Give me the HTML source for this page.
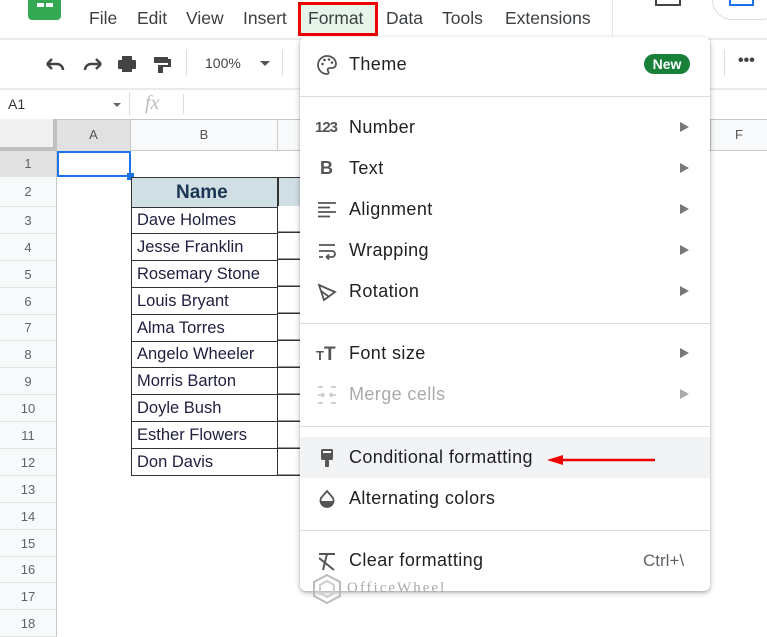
<!DOCTYPE html>
<html><head><meta charset="utf-8">
<style>
*{margin:0;padding:0;box-sizing:border-box}
body{width:767px;height:628px;overflow:hidden;background:#fff;font-family:"Liberation Sans",Arial,sans-serif;position:relative;color:#202124}
.abs{position:absolute}
.menu span{position:absolute;top:8px;font-size:17.5px;color:#3c4043}
.rh{position:absolute;left:0;width:57px;text-align:center;font-size:13px;color:#5f6368;border-bottom:1px solid #e2e3e3;background:#f8f9fa;border-right:1px solid #c7c7c7}
.cell{position:absolute;left:131px;width:147px;height:27px;border:1.5px solid #333;border-top:none;font-size:16.5px;padding-left:5px;line-height:27px;color:#1f1f3f}
.mi{position:absolute;left:300px;width:410px;height:41px}
.mi .t{position:absolute;left:49px;top:10px;font-size:18px;letter-spacing:0.4px;color:#202124}
.mi .ar{position:absolute;left:380px;top:15px;width:0;height:0;border-left:9px solid #777;border-top:5px solid transparent;border-bottom:5px solid transparent}
.mi svg{position:absolute;left:16px;top:10px}
.sep{position:absolute;left:300px;width:410px;height:1px;background:#dadce0}
</style></head><body>
<div class="abs" style="left:28px;top:0;width:33px;height:20px;background:#34a853;border-radius:0 0 4px 4px"></div>
<div class="abs" style="left:37px;top:3px;width:7px;height:4px;background:#fff"></div>
<div class="abs" style="left:46px;top:3px;width:7px;height:4px;background:#fff"></div>
<div class="menu">
<span style="left:89px">File</span><span style="left:137px">Edit</span><span style="left:186px">View</span><span style="left:243px">Insert</span><span style="left:386px">Data</span><span style="left:442px">Tools</span><span style="left:505px">Extensions</span>
</div>
<div class="abs" style="left:298px;top:2px;width:80px;height:34px;border:3px solid #e00;background:#e6f4ea"></div>
<span class="abs" style="left:308px;top:8px;font-size:17.5px;color:#3c4043">Format</span>
<div class="abs" style="left:612px;top:0;width:1px;height:38px;background:#e8e8e8"></div>
<div class="abs" style="left:655px;top:0;width:26px;height:6px;border:2px solid #444;border-top:none"></div>
<div class="abs" style="left:712px;top:-20px;width:70px;height:40px;border:1px solid #ddd;border-radius:20px"></div>
<div class="abs" style="left:729px;top:0;width:25px;height:6px;border:2px solid #1a73e8;border-top:none"></div>
<div class="abs" style="left:0;top:38px;width:767px;height:2px;background:#eaeaea"></div>
<svg class="abs" style="left:44px;top:54px" width="130" height="20" viewBox="0 0 130 20">
<path d="M3 10 L8 5 M3 10 L8 15 M3 10 H13 A6 6 0 0 1 19 16" stroke="#444" stroke-width="2.5" fill="none"/>
<path d="M58 10 L53 5 M58 10 L53 15 M58 10 H48 A6 6 0 0 0 42 16" stroke="#444" stroke-width="2.5" fill="none" transform="translate(-1,0)"/>
<rect x="74" y="6" width="18" height="9" rx="1" fill="#444"/><rect x="78" y="2" width="10" height="4" fill="#444"/><rect x="78" y="12" width="10" height="6" fill="#444"/>
<rect x="110" y="3" width="14" height="6" fill="#444"/><rect x="124" y="5" width="3" height="7" fill="#444"/><rect x="114" y="11" width="5" height="8" fill="#444"/><path d="M127 12 H117 V12" stroke="#444" stroke-width="2"/>
</svg>
<div class="abs" style="left:186px;top:50px;width:1px;height:26px;background:#ddd"></div>
<span class="abs" style="left:205px;top:55px;font-size:14px;color:#444">100%</span>
<div class="abs" style="left:260px;top:61px;border-top:5px solid #555;border-left:5px solid transparent;border-right:5px solid transparent"></div>
<div class="abs" style="left:282px;top:50px;width:1px;height:26px;background:#ddd"></div>
<div class="abs" style="left:724px;top:50px;width:1px;height:26px;background:#ddd"></div>
<span class="abs" style="left:738px;top:52px;font-size:16px;color:#444;font-weight:bold">•••</span>
<div class="abs" style="left:0;top:88px;width:767px;height:2px;background:#eaeaea"></div>
<span class="abs" style="left:8px;top:96px;font-size:14px;color:#333">A1</span>
<div class="abs" style="left:113px;top:103px;border-top:4px solid #666;border-left:4px solid transparent;border-right:4px solid transparent"></div>
<div class="abs" style="left:129px;top:92px;width:1px;height:24px;background:#ddd"></div>
<span class="abs" style="left:145px;top:92px;font-size:20px;color:#bbb;font-style:italic;font-family:'Liberation Serif',serif">fx</span>
<div class="abs" style="left:183px;top:94px;width:1px;height:20px;background:#ddd"></div>
<div class="abs" style="left:0;top:119px;width:767px;height:32px;background:#f8f9fa;border-top:1px solid #c7c7c7;border-bottom:1px solid #c7c7c7"></div>
<div class="abs" style="left:0;top:119px;width:57px;height:32px;background:#f1f1f1;border-right:4px solid #c0c0c0;border-bottom:4px solid #c0c0c0"></div>
<div class="abs" style="left:57px;top:120px;width:74px;height:31px;background:#e1e1e1;border-right:1px solid #ccc;text-align:center;line-height:30px;font-size:13px;color:#555">A</div>
<div class="abs" style="left:131px;top:120px;width:147px;height:31px;border-right:1px solid #ccc;text-align:center;line-height:30px;font-size:13px;color:#555">B</div>
<div class="abs" style="left:710px;top:120px;width:57px;height:31px;border-left:1px solid #ccc;text-align:center;line-height:30px;font-size:13px;color:#555">F</div>
<div class="rh" style="top:151px;height:26px;line-height:26px;background:#e1e1e1">1</div>
<div class="rh" style="top:177px;height:30px;line-height:30px">2</div>
<div class="rh" style="top:207px;height:27px;line-height:27px">3</div>
<div class="rh" style="top:234px;height:27px;line-height:27px">4</div>
<div class="rh" style="top:261px;height:27px;line-height:27px">5</div>
<div class="rh" style="top:288px;height:27px;line-height:27px">6</div>
<div class="rh" style="top:315px;height:26px;line-height:26px">7</div>
<div class="rh" style="top:341px;height:27px;line-height:27px">8</div>
<div class="rh" style="top:368px;height:27px;line-height:27px">9</div>
<div class="rh" style="top:395px;height:27px;line-height:27px">10</div>
<div class="rh" style="top:422px;height:27px;line-height:27px">11</div>
<div class="rh" style="top:449px;height:27px;line-height:27px">12</div>
<div class="rh" style="top:476px;height:27px;line-height:27px">13</div>
<div class="rh" style="top:503px;height:27px;line-height:27px">14</div>
<div class="rh" style="top:530px;height:27px;line-height:27px">15</div>
<div class="rh" style="top:557px;height:26px;line-height:26px">16</div>
<div class="rh" style="top:583px;height:27px;line-height:27px">17</div>
<div class="rh" style="top:610px;height:27px;line-height:27px">18</div>
<div class="abs" style="left:57px;top:151px;width:74px;height:26px;border:2px solid #1a73e8"></div>
<div class="abs" style="left:127px;top:173px;width:7px;height:7px;background:#1a73e8"></div>
<div class="abs" style="left:131px;top:177px;width:170px;height:31px;background:#d0dfe3;border:1.5px solid #333"></div>
<div class="abs" style="left:277px;top:177px;width:1.5px;height:299px;background:#333"></div>
<span class="abs" style="left:176px;top:182px;font-size:19px;font-weight:bold;color:#1c3554">Name</span>
<div class="cell" style="top:207px">Dave Holmes</div>
<div class="cell" style="top:234px">Jesse Franklin</div>
<div class="cell" style="top:261px">Rosemary Stone</div>
<div class="cell" style="top:288px">Louis Bryant</div>
<div class="cell" style="top:315px">Alma Torres</div>
<div class="cell" style="top:341px">Angelo Wheeler</div>
<div class="cell" style="top:368px">Morris Barton</div>
<div class="cell" style="top:395px">Doyle Bush</div>
<div class="cell" style="top:422px">Esther Flowers</div>
<div class="cell" style="top:449px">Don Davis</div>
<div class="abs" style="left:278px;top:206px;width:22px;height:270px;border-bottom:1.5px solid #333;background:repeating-linear-gradient(#fff 0,#fff 25.5px,#333 25.5px,#333 27px)"></div>
<div class="abs" style="left:300px;top:37px;width:410px;height:554px;background:#fff;border-radius:6px;box-shadow:0 2px 6px rgba(0,0,0,.25),0 1px 2px rgba(0,0,0,.15)"></div>
<div class="mi" style="top:44px"><svg width="22" height="22" viewBox="0 0 22 22"><path d="M11 2 A9 9 0 0 0 11 20 C13 20 13 18 12 17 C11 15.5 12 14 14 14 H16 A4 4 0 0 0 20 10 C20 5.5 16 2 11 2 Z" fill="none" stroke="#555" stroke-width="1.8"/><circle cx="6.5" cy="10" r="1.3" fill="#555"/><circle cx="8.5" cy="6" r="1.3" fill="#555"/><circle cx="13" cy="5.5" r="1.3" fill="#555"/><circle cx="16" cy="8.5" r="1.3" fill="#555"/></svg><span class="t">Theme</span>
<div class="abs" style="left:344px;top:10px;width:46px;height:20px;border-radius:10px;background:#188038;color:#fff;font-size:14px;font-weight:bold;text-align:center;line-height:20px">New</div></div>
<div class="sep" style="top:96px"></div>
<div class="mi" style="top:107px"><span class="abs" style="left:15px;top:12px;font-size:15px;font-weight:bold;color:#555;letter-spacing:-1px">123</span><span class="t">Number</span><div class="ar"></div></div>
<div class="mi" style="top:148px"><span class="abs" style="left:20px;top:10px;font-size:18px;font-weight:bold;color:#555">B</span><span class="t">Text</span><div class="ar"></div></div>
<div class="mi" style="top:189px"><svg width="22" height="22" viewBox="0 0 22 22"><path d="M2 4H20M2 8.5H14M2 13H20M2 17.5H14" stroke="#555" stroke-width="1.8"/></svg><span class="t">Alignment</span><div class="ar"></div></div>
<div class="mi" style="top:230px"><svg width="22" height="22" viewBox="0 0 22 22"><path d="M3 5H19M3 11H16A3 3 0 0 1 16 17H11M13 14.5L10.5 17L13 19.5M3 17H7" stroke="#555" stroke-width="1.8" fill="none"/></svg><span class="t">Wrapping</span><div class="ar"></div></div>
<div class="mi" style="top:271px"><svg width="22" height="22" viewBox="0 0 22 22"><path d="M3 4L19 11L8 19Z M5 10L12 15" stroke="#555" stroke-width="1.8" fill="none"/></svg><span class="t">Rotation</span><div class="ar"></div></div>
<div class="sep" style="top:323px"></div>
<div class="mi" style="top:333px"><span class="abs" style="left:16px;top:11px;font-size:19px;font-weight:bold;color:#555"><span style="font-size:13px">T</span>T</span><span class="t">Font size</span><div class="ar"></div></div>
<div class="mi" style="top:374px"><svg width="22" height="22" viewBox="0 0 22 22"><path d="M2 3H7M2 19H7M15 3H20M15 19H20M2 11H8M6 9L8 11L6 13M20 11H14M16 9L14 11L16 13" stroke="#ccc" stroke-width="1.8" fill="none"/></svg><span class="t" style="color:#aaa">Merge cells</span><div class="ar" style="border-left-color:#aaa"></div></div>
<div class="sep" style="top:426px"></div>
<div class="mi" style="top:437px;background:#f1f3f4"><svg width="22" height="22" viewBox="0 0 22 22"><rect x="5" y="2" width="12" height="11" rx="1.5" fill="#555"/><rect x="7" y="4" width="8" height="2" fill="#fff"/><rect x="9" y="13" width="4" height="7" rx="1" fill="#555"/></svg><span class="t">Conditional formatting</span></div>
<svg class="abs" style="left:545px;top:452px" width="112" height="16"><path d="M110 8H15" stroke="#e00" stroke-width="2.5"/><path d="M2 8L18 3V13Z" fill="#e00"/></svg>
<div class="mi" style="top:478px"><svg width="22" height="22" viewBox="0 0 22 22"><path d="M11 3L5 10A6.5 6.5 0 1 0 17 10Z" fill="none" stroke="#555" stroke-width="1.8"/><path d="M4.5 13H17.5A6.5 6.5 0 0 1 4.5 13Z" fill="#555"/></svg><span class="t">Alternating colors</span></div>
<div class="sep" style="top:530px"></div>
<div class="mi" style="top:540px"><svg width="22" height="22" viewBox="0 0 22 22"><path d="M3 4H19M11 4L7 20M3 8L18 20" stroke="#555" stroke-width="2" fill="none"/></svg><span class="t">Clear formatting</span><span class="abs" style="left:343px;top:11px;font-size:17px;color:#5f6368">Ctrl+\</span></div>
<svg class="abs" style="left:312px;top:573px" width="30" height="32" viewBox="0 0 30 32"><path d="M15 2L28 9V23L15 30L2 23V9Z" fill="none" stroke="#bbb" stroke-width="2"/><path d="M15 8L22 12V20L15 24L8 20V12Z" fill="none" stroke="#ccc" stroke-width="2"/></svg>
<span class="abs" style="left:347px;top:580px;font-size:15px;color:#aaa;letter-spacing:2px;font-family:'Liberation Serif',serif">OfficeWheel</span>
</body></html>
